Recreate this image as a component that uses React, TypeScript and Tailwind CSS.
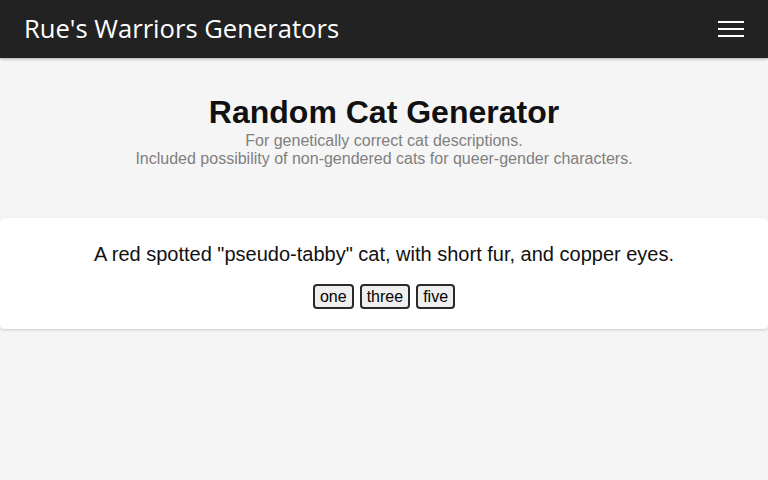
export default function App() {
  const sans = { fontFamily: '"Liberation Sans", Arial, sans-serif' };

  return (
    <div className="min-h-screen bg-[#f5f5f5]" style={sans}>
      {/* Navbar */}
      <nav className="flex h-[58px] items-center justify-between bg-[#222222] pl-6 pr-6 shadow-[0_1px_3px_rgba(0,0,0,0.3)]">
        <span
          className="text-[25.6px] leading-none text-white"
          style={{ fontFamily: '"Open Sans", sans-serif' }}
        >
          Rue's Warriors Generators
        </span>
        <button className="flex flex-col gap-[5px]" aria-label="menu">
          <span className="block h-[2px] w-[26px] bg-white" />
          <span className="block h-[2px] w-[26px] bg-white" />
          <span className="block h-[2px] w-[26px] bg-white" />
        </button>
      </nav>

      {/* Header */}
      <header className="pt-[35px] text-center">
        <h1 className="text-[32px] font-bold leading-[38px] text-[#111]">Random Cat Generator</h1>
        <p className="mt-[1px] text-base leading-[18px] text-[#808080]">
          For genetically correct cat descriptions.
          <br />
          Included possibility of non-gendered cats for queer-gender characters.
        </p>
      </header>

      {/* Result card */}
      <section className="mt-[50px] rounded-[4px] bg-white pb-[20px] pt-[20px] text-center shadow-[0_1px_3px_rgba(0,0,0,0.18)]">
        <p className="text-[20px] leading-[32px] text-[#111]">
          A red spotted "pseudo-tabby" cat, with short fur, and copper eyes.
        </p>
        <div className="mt-[14px] flex justify-center gap-[6px]">
          {["one", "three", "five"].map((label) => (
            <button
              key={label}
              className="h-[25px] rounded-[4px] border-2 border-[#2a2a2a] bg-[#efefef] px-[5px] text-base leading-[19px] text-black"
            >
              {label}
            </button>
          ))}
        </div>
      </section>
    </div>
  );
}
